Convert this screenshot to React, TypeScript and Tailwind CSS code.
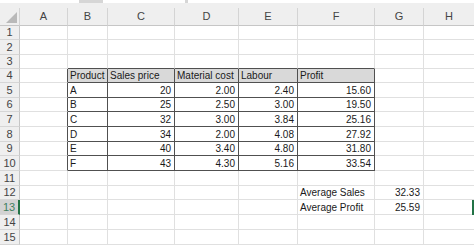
import React from "react";

const colW = [20, 48, 40, 67, 64, 59, 77, 49, 50];
const letters = ["", "A", "B", "C", "D", "E", "F", "G", "H"];
const rowH = [14, 15, 14, 14, 15, 14, 15, 15, 14, 15, 15, 14, 15, 15, 15];

type Cell = { t: string; r?: boolean };
const data: Record<string, Cell> = {};
const put = (row: number, col: number, t: string, r = false) => {
  data[`${row}-${col}`] = { t, r };
};
["Product", "Sales price", "Material cost", "Labour", "Profit"].forEach((t, i) =>
  put(4, 2 + i, t)
);
const rows: [string, string, string, string, string][] = [
  ["A", "20", "2.00", "2.40", "15.60"],
  ["B", "25", "2.50", "3.00", "19.50"],
  ["C", "32", "3.00", "3.84", "25.16"],
  ["D", "34", "2.00", "4.08", "27.92"],
  ["E", "40", "3.40", "4.80", "31.80"],
  ["F", "43", "4.30", "5.16", "33.54"],
];
rows.forEach((r, i) => {
  put(5 + i, 2, r[0]);
  put(5 + i, 3, r[1], true);
  put(5 + i, 4, r[2], true);
  put(5 + i, 5, r[3], true);
  put(5 + i, 6, r[4], true);
});
put(12, 6, "Average Sales");
put(12, 7, "32.33", true);
put(13, 6, "Average Profit");
put(13, 7, "25.59", true);

const inTable = (r: number, c: number) => r >= 4 && r <= 10 && c >= 2 && c <= 6;

export default function App() {
  return (
    <div className="w-[474px] h-[245px] overflow-hidden bg-white font-['Liberation_Sans',Arial,sans-serif] text-[10px] text-[#1a1a1a]">
      {/* top strip */}
      <div className="flex h-[3px] bg-[#d6d6d6]">
        <div className="w-[79px] bg-white" />
        <div className="w-[24px]" />
        <div className="w-[82px] bg-white" />
        <div className="w-[3px]" />
        <div className="flex-1 bg-white" />
      </div>
      <div className="h-[5px] bg-[#efefef]" />
      {/* column headers */}
      <div className="flex h-[18px] bg-[#efefef] text-[#444] text-[11px]">
        {colW.map((w, i) => (
          <div
            key={i}
            style={{ width: w }}
            className={`relative shrink-0 flex items-center justify-center border-b border-[#c6c6c6] ${
              i < colW.length - 1 ? "border-r border-r-[#d4d4d4]" : ""
            }`}
          >
            {i === 0 ? (
              <svg width="11" height="11" viewBox="0 0 11 11" className="absolute right-[2px] bottom-[2px]">
                <polygon points="11,0 11,11 0,11" fill="#b9b9b9" />
              </svg>
            ) : (
              letters[i]
            )}
          </div>
        ))}
      </div>
      {/* rows */}
      {rowH.map((h, ri) => {
        const r = ri + 1;
        const sel = r === 13;
        return (
          <div key={r} className="flex" style={{ height: h }}>
            {colW.map((w, c) => {
              if (c === 0) {
                return (
                  <div
                    key={c}
                    style={{ width: w }}
                    className={`shrink-0 flex items-center justify-center text-[11px] border-b border-[#d6d6d6] ${
                      sel
                        ? "bg-[#d3d3d3] text-[#3f7f5f] border-r-2 border-r-[#217346]"
                        : "bg-[#efefef] text-[#444] border-r border-r-[#c6c6c6]"
                    }`}
                  >
                    {r}
                  </div>
                );
              }
              const cell = data[`${r}-${c}`];
              const tbl = inTable(r, c);
              const darkRight = tbl || (c === 1 && r >= 4 && r <= 10);
              const darkBottom = tbl || (r === 3 && c >= 2 && c <= 6);
              const last = c === colW.length - 1;
              return (
                <div
                  key={c}
                  style={{ width: w }}
                  className={`relative shrink-0 flex items-center whitespace-nowrap ${
                    cell?.r ? "justify-end pr-[3px]" : "justify-start pl-[2px]"
                  } ${darkRight ? "border-r border-r-[#505050]" : last ? "" : "border-r border-r-[#e0e0e0]"} ${
                    darkBottom ? "border-b border-b-[#505050]" : "border-b border-b-[#e0e0e0]"
                  } ${r === 4 && tbl ? "bg-[#d9d9d9]" : ""}`}
                >
                  {cell?.t}
                  {sel && last && (
                    <div className="absolute right-0 top-0 bottom-[-1px] w-[2px] bg-[#217346]" />
                  )}
                </div>
              );
            })}
          </div>
        );
      })}
    </div>
  );
}
